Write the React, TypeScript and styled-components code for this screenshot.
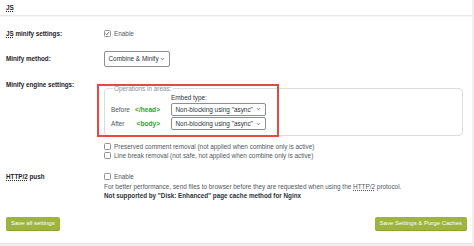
import React, { FC } from "react";
import styled, { createGlobalStyle } from "styled-components";

const GlobalStyle = createGlobalStyle`
  html, body {
    margin: 0;
    padding: 0;
    background: #f0f0f1;
  }
  * {
    box-sizing: border-box;
  }
`;

const Page = styled.div`
  width: 474px;
  height: 246px;
  overflow: hidden;
  font-family: "Liberation Sans", Arial, sans-serif;
  font-size: 6.4px;
  color: #50575e;
`;

const Panel = styled.div`
  width: 472px;
  height: 243px;
  background: #fff;
  box-shadow: 0 1px 1px rgba(0, 0, 0, 0.04);
  display: flex;
  flex-direction: column;
`;

const Header = styled.div`
  height: 16px;
  padding-left: 6px;
  display: flex;
  align-items: center;
  border-bottom: 1px solid #e8e8e9;
  box-shadow: 0 1px 1px rgba(0, 0, 0, 0.03);
  color: #1d2327;
  font-weight: 700;
`;

const Body = styled.div`
  padding: 0 6px;
  display: flex;
  flex-direction: column;
  flex: 1;
`;

interface IRowProps {
  marginTop: number;
}
const Row = styled.div<IRowProps>`
  display: grid;
  grid-template-columns: 98px 1fr;
  align-items: start;
  margin-top: ${({ marginTop }) => marginTop}px;
`;

interface ILabelProps {
  lineHeight?: number;
}
const Label = styled.div<ILabelProps>`
  font-weight: 700;
  font-size: 6.3px;
  color: #1d2327;
  line-height: ${({ lineHeight }) => lineHeight || 10}px;
`;

const Abbr = styled.span`
  text-decoration: underline dotted;
  text-underline-offset: 1px;
`;

const Field = styled.div`
  position: relative;
  display: flex;
  flex-direction: column;
`;

interface ICheckLineProps {
  lineHeight?: number;
}
const CheckLine = styled.label<ICheckLineProps>`
  display: flex;
  align-items: center;
  gap: 3.5px;
  line-height: ${({ lineHeight }) => lineHeight || 10}px;
  color: #50575e;
`;

const Box = styled.span`
  width: 6.5px;
  height: 6.5px;
  border: 0.6px solid #8c8f94;
  border-radius: 1.5px;
  background: #fff;
  display: inline-flex;
  align-items: center;
  justify-content: center;
  flex-shrink: 0;
`;

const Checkbox: FC<{ checked?: boolean }> = ({ checked }) => (
  <Box>
    {checked && (
      <svg width="5" height="5" viewBox="0 0 10 10">
        <path d="M1.6 5.2 L4 7.6 L8.6 2.2" fill="none" stroke="#1d2327" strokeWidth="1.6" />
      </svg>
    )}
  </Box>
);

interface ISelectProps {
  width: number;
  height: number;
}
const SelectBox = styled.div<ISelectProps>`
  width: ${({ width }) => width}px;
  height: ${({ height }) => height}px;
  border: 0.7px solid #8c8f94;
  border-radius: 2px;
  background: #fff;
  display: flex;
  align-items: center;
  justify-content: space-between;
  padding: 0 4px 0 3.5px;
  color: #2c3338;
  white-space: nowrap;
`;

const Chevron = () => (
  <svg width="5" height="4" viewBox="0 0 10 8">
    <path d="M1.5 2 L5 5.5 L8.5 2" fill="none" stroke="#50575e" strokeWidth="1.3" />
  </svg>
);

const Select: FC<{ width: number; height: number; value: string }> = ({ width, height, value }) => (
  <SelectBox width={width} height={height}>
    <span>{value}</span>
    <Chevron />
  </SelectBox>
);

const Fieldset = styled.fieldset`
  margin: 5px 3px 0 0;
  padding: 2px 0 4.5px 6px;
  border: 0.8px solid #dcdcde;
  border-radius: 4px;
  min-width: 0;
`;

const Legend = styled.legend`
  margin-left: 1.5px;
  padding: 0 1.5px;
  line-height: 7px;
  color: #8c8f94;
`;

const AreaGrid = styled.div`
  display: grid;
  grid-template-columns: 23px 37px 95px;
  row-gap: 1.6px;
  align-items: center;
`;

const EmbedHead = styled.div`
  grid-column: 3;
  line-height: 7px;
  color: #2c3338;
`;

const AreaName = styled.div`
  color: #50575e;
`;

const Tag = styled.div`
  color: #2e9f2a;
  font-weight: 700;
  font-size: 6.6px;
  text-align: right;
  padding-right: 11px;
`;

const Highlight = styled.div`
  position: absolute;
  left: -7px;
  top: 4px;
  width: 182px;
  height: 53px;
  border: 2px solid #e8493e;
  pointer-events: none;
`;

const Options = styled.div`
  margin-top: 6.5px;
  display: flex;
  flex-direction: column;
`;

interface IDescProps {
  strong?: boolean;
}
const Desc = styled.div<IDescProps>`
  line-height: 9.3px;
  color: ${({ strong }) => (strong ? "#2c3338" : "#50575e")};
  font-weight: ${({ strong }) => (strong ? 700 : 400)};
  font-size: ${({ strong }) => (strong ? 6.3 : 6.4)}px;
`;

const ButtonBar = styled.div`
  margin-top: 17px;
  display: flex;
  justify-content: space-between;
  margin-right: -1px;
`;

const Button = styled.button`
  height: 12.5px;
  padding: 0 5px;
  border: none;
  border-radius: 2px;
  background: #9db53b;
  color: #fff;
  font-family: inherit;
  font-size: 6px;
  line-height: 12.5px;
  box-shadow: 0 1px 0 #8aa22f;
`;

const App: FC = () => (
  <Page>
    <GlobalStyle />
    <Panel>
      <Header>
        <Abbr>JS</Abbr>
      </Header>
      <Body>
        <Row marginTop={12.5}>
          <Label>
            <Abbr>JS</Abbr> minify settings:
          </Label>
          <CheckLine>
            <Checkbox checked />
            Enable
          </CheckLine>
        </Row>

        <Row marginTop={12.5}>
          <Label lineHeight={15.5}>Minify method:</Label>
          <Select width={66} height={15.5} value="Combine & Minify" />
        </Row>

        <Row marginTop={13.5}>
          <Label>Minify engine settings:</Label>
          <Field>
            <Fieldset>
              <Legend>Operations in areas:</Legend>
              <AreaGrid>
                <EmbedHead>Embed type:</EmbedHead>
                <AreaName>Before</AreaName>
                <Tag>&lt;/head&gt;</Tag>
                <Select width={95} height={13} value={'Non-blocking using "async"'} />
                <AreaName>After</AreaName>
                <Tag>&lt;body&gt;</Tag>
                <Select width={95} height={13} value={'Non-blocking using "async"'} />
              </AreaGrid>
            </Fieldset>
            <Highlight />
            <Options>
              <CheckLine lineHeight={9}>
                <Checkbox />
                Preserved comment removal (not applied when combine only is active)
              </CheckLine>
              <CheckLine lineHeight={9}>
                <Checkbox />
                Line break removal (not safe, not applied when combine only is active)
              </CheckLine>
            </Options>
          </Field>
        </Row>

        <Row marginTop={11.5}>
          <Label>
            <Abbr>HTTP/2</Abbr> push
          </Label>
          <Field>
            <CheckLine>
              <Checkbox />
              Enable
            </CheckLine>
            <Desc>
              For better performance, send files to browser before they are requested when using the{" "}
              <Abbr>HTTP/2</Abbr> protocol.
            </Desc>
            <Desc strong>Not supported by "Disk: Enhanced" page cache method for Nginx</Desc>
          </Field>
        </Row>

        <ButtonBar>
          <Button>Save all settings</Button>
          <Button>Save Settings &amp; Purge Caches</Button>
        </ButtonBar>
      </Body>
    </Panel>
  </Page>
);

export default App;
